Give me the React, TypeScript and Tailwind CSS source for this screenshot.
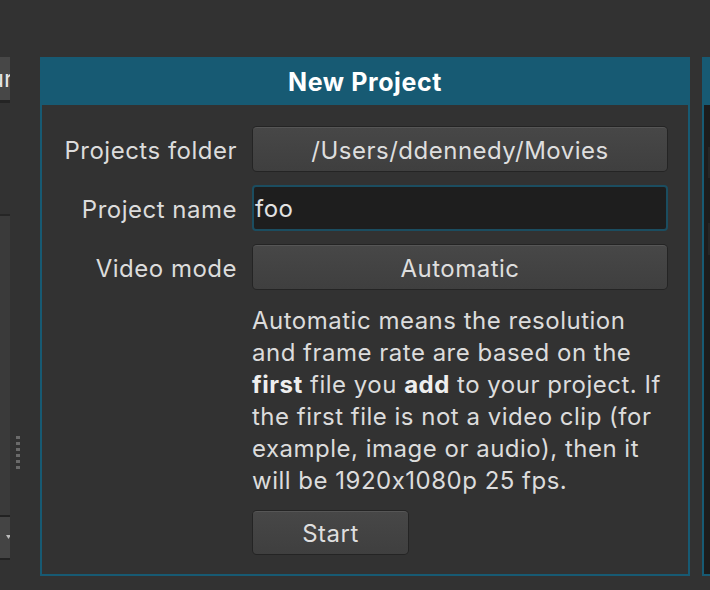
import React from 'react'

const font = { fontFamily: 'Inter, "Noto Sans", sans-serif' }

// Qt style push button: dark rim, lighter face with soft highlight
function PushButton({ children, className = '' }: { children: React.ReactNode; className?: string }) {
  return (
    <div className={`rounded-[5px] bg-[#242424] p-px ${className}`}>
      <div className="flex h-full items-center justify-center rounded-[4px] border-t border-[#565656] bg-gradient-to-b from-[#474747] to-[#3f3f3f] pt-[2px] text-[24px] tracking-[0.5px] text-[#dedede]">
        {children}
      </div>
    </div>
  )
}

function Label({ children }: { children: React.ReactNode }) {
  return (
    <div className="flex h-[46px] items-center justify-end pt-[3px] text-[24px] tracking-[0.5px] text-[#dcdcdc]">
      {children}
    </div>
  )
}

export default function App() {
  return (
    <div
      className="flex h-[590px] w-[710px] overflow-hidden bg-[#323232] pt-[57px] [font-feature-settings:'calt'_0]"
      style={font}
    >
      {/* Left neighbouring dock, mostly cut off */}
      <div className="flex h-[503px] w-[10px] shrink-0 flex-col overflow-hidden">
        <div className="flex h-[46px] w-[10px] items-center justify-end overflow-hidden border-b-[3px] border-[#242424] bg-[#474747]">
          <span className="-mr-[3px] shrink-0 text-[24px] text-[#e6e6e6]">ur</span>
        </div>
        <div className="h-[111px]" />
        <div className="h-[301px] border-t-2 border-[#262626] bg-[#3a3a3a]" />
        <div className="relative h-[45px] border-y-2 border-[#222] bg-[#444]">
          <svg className="absolute left-[6px] top-[18px]" width="5" height="4" viewBox="0 0 5 4">
            <path d="M0 0h5L2.5 4z" fill="#bbb" />
          </svg>
        </div>
      </div>

      {/* Splitter grip */}
      <div className="flex w-[30px] shrink-0 flex-col gap-[3px] pl-[6px] pt-[379px]">
        {[0, 1, 2, 3, 4, 5].map((i) => (
          <div key={i} className="h-[3px] w-[4px] bg-[#6a6a6a]" />
        ))}
      </div>

      {/* New Project dock */}
      <div className="flex h-[519px] w-[650px] shrink-0 flex-col border-2 border-t-0 border-[#175a73]">
        <div className="flex h-[48px] items-center justify-center bg-[#175a73] pt-[4px] text-[25px] font-bold tracking-[0.6px] text-white">
          New Project
        </div>
        <div className="flex-1 bg-[#323232] pr-[18px] pt-[21px]">
          <div className="grid grid-cols-[195px_416px] gap-x-[15px] gap-y-[13px]">
            <Label>Projects folder</Label>
            <PushButton className="h-[46px]">/Users/ddennedy/Movies</PushButton>

            <Label>Project name</Label>
            <div className="flex h-[46px] items-center rounded-[4px] border-2 border-[#1b4d60] bg-[#1e1e1e] px-[1px] pt-[2px] text-[24px] tracking-[0.5px] text-[#e2e2e2]">
              foo
            </div>

            <Label>Video mode</Label>
            <PushButton className="h-[46px]">Automatic</PushButton>

            <div />
            <div className="pt-[2px] text-[24px] leading-[32px] tracking-[0.5px] text-[#dcdcdc]">
              Automatic means the resolution and frame rate are based on the <b className="text-[#eeeeee]">first</b> file
              you <b className="text-[#eeeeee]">add</b> to your project. If the first file is not a video clip (for
              example, image or audio), then it will be 1920x1080p 25 fps.
            </div>

            <div />
            <PushButton className="h-[45px] w-[157px]">Start</PushButton>
          </div>
        </div>
      </div>

      {/* Right neighbouring dock */}
      <div className="ml-[12px] flex h-[519px] w-[20px] shrink-0 flex-col border-b-2 border-l-2 border-[#175a73]">
        <div className="h-[48px] bg-[#175a73]" />
        <div className="flex-1 bg-[#1c1c1c] pl-[4px] pt-[42px]">
          <div className="h-[31px] w-[4px] bg-[#262626]" />
          <div className="mt-[45px] h-[32px] w-[4px] bg-[#262626]" />
        </div>
      </div>
    </div>
  )
}
